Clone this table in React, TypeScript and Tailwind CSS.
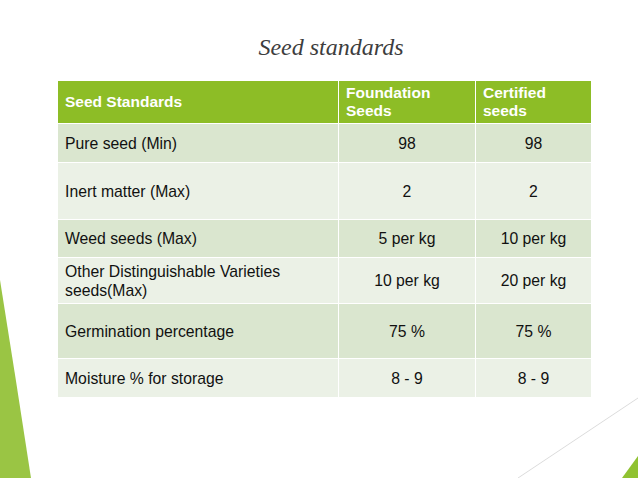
const rows = [
  { label: "Pure seed (Min)", a: "98", b: "98", h: "h-[38px]", bg: "bg-[#dae6cf]" },
  { label: "Inert matter (Max)", a: "2", b: "2", h: "h-[56px]", bg: "bg-[#ebf1e6]" },
  { label: "Weed seeds (Max)", a: "5 per kg", b: "10 per kg", h: "h-[37px]", bg: "bg-[#dae6cf]" },
  {
    label: "Other Distinguishable Varieties seeds(Max)",
    a: "10 per kg",
    b: "20 per kg",
    h: "h-[45px]",
    bg: "bg-[#ebf1e6]",
  },
  { label: "Germination percentage", a: "75 %", b: "75 %", h: "h-[54px]", bg: "bg-[#dae6cf]" },
  { label: "Moisture % for storage", a: "8 - 9", b: "8 - 9", h: "h-[38px]", bg: "bg-[#ebf1e6]" },
];

export default function App() {
  return (
    <div className="relative w-[638px] h-[478px] overflow-hidden bg-white">
      {/* slide decorations */}
      <svg className="absolute inset-0" width="638" height="478" viewBox="0 0 638 478">
        <path d="M0 280 Q16 380 31 478 L0 478 Z" fill="#9ac544" />
        <line x1="518" y1="478" x2="638" y2="398" stroke="#dcdcdc" strokeWidth="1" />
        <path d="M622 478 L638 456 L638 478 Z" fill="#90c232" />
      </svg>

      <div className="relative flex flex-col">
        <div className="pt-[32px] h-[81px] pl-[24px] text-center">
          <h1 className="text-[24px] leading-[30px] italic text-[#3d3d3d] font-['Liberation_Serif',serif]">
            Seed standards
          </h1>
        </div>

        <div className="ml-[58px] w-[533px] flex flex-col gap-px font-['Liberation_Sans',Arial,sans-serif]">
          <div className="grid grid-cols-[280px_136px_115px] gap-x-px h-[42px] text-white text-[15.5px] font-bold leading-[18px]">
            <div className="bg-[#8dbd26] flex items-center px-[7px]">Seed Standards</div>
            <div className="bg-[#8dbd26] flex items-center px-[7px]">
              Foundation
              <br />
              Seeds
            </div>
            <div className="bg-[#8dbd26] flex items-center px-[7px]">
              Certified
              <br />
              seeds
            </div>
          </div>

          {rows.map((r) => (
            <div
              key={r.label}
              className={`grid grid-cols-[280px_136px_115px] gap-x-px text-[#111] text-[15.75px] leading-[19px] ${r.h}`}
            >
              <div className={`${r.bg} flex items-center px-[7px]`}>{r.label}</div>
              <div className={`${r.bg} flex items-center justify-center`}>{r.a}</div>
              <div className={`${r.bg} flex items-center justify-center`}>{r.b}</div>
            </div>
          ))}
        </div>
      </div>
    </div>
  );
}
